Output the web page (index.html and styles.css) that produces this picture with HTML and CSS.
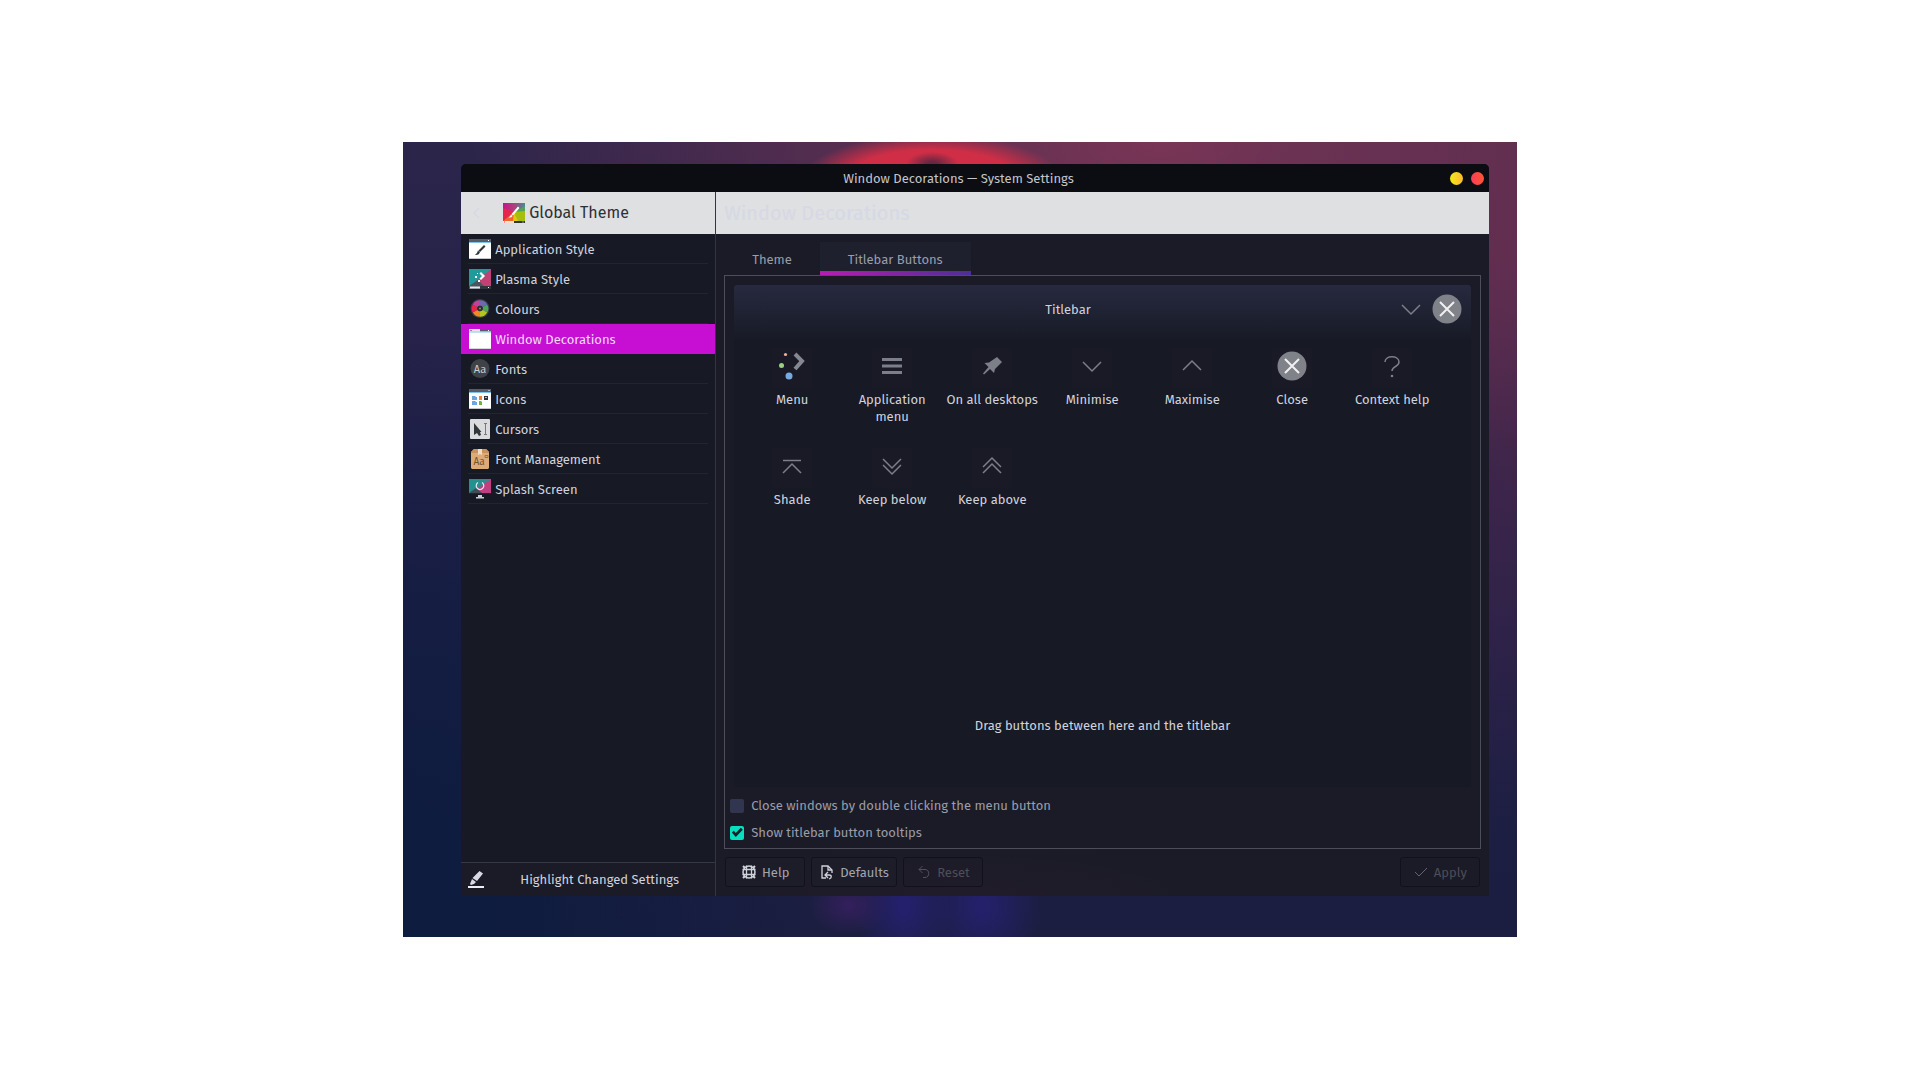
FILE: index.html
```html
<!DOCTYPE html>
<html lang="en-GB">
<head>
    <meta charset="UTF-8">
    <meta name="viewport" content="width=device-width, initial-scale=1.0">
    <title>Window Decorations — System Settings</title>
    <link rel="stylesheet" href="styles.css">
</head>
<body>
    <div class="desktop">
        <div class="window">
            <header class="titlebar">
                <h1>Window Decorations — System Settings</h1>
                <button class="dot yellow" aria-label="Minimise window"></button>
                <button class="dot red" aria-label="Close window"></button>
            </header>
            <div class="content">
                <aside class="sidebar">
                    <div class="side-header">
                        <button class="back" aria-label="Back">
                            <svg width="12" height="12" viewBox="0 0 12 12"><path d="M8 1 3 6l5 5" fill="none" stroke="#d7d9e5" stroke-width="1.500"/></svg>
                        </button>
                        <svg width="22" height="22" viewBox="0 0 22 22">
                            <defs>
                                <linearGradient id="rainbow" x1="0" y1="0" x2="1" y2="0"><stop offset="0" stop-color="#c3148e"/><stop offset=".5" stop-color="#b0407c"/><stop offset="1" stop-color="#3f8f9b"/></linearGradient>
                            </defs>
                            <rect y="1" width="22" height="18" fill="url(#rainbow)"/>
                            <path d="M0 6 11 10 0 19z" fill="#e8264c"/>
                            <path d="M22 4v8l-11-2z" fill="#55a05a"/>
                            <path d="m11 10 11-1v10h-8z" fill="#a8bd12"/>
                            <path d="M11 10 15 19H9z" fill="#e3c80d"/>
                            <path d="M11 10 10 19H0z" fill="#f2642c"/>
                            <path d="M15 4.500 16.500 6 10 13.500 8.500 12zM8 12.500l1.500 1.500q-1 2-4 1.500 2-1 2.500-3z" fill="#fff"/>
                            <path d="M0 19h11v2H0z" fill="#fbe3cf"/><path d="M11 19h11v2H11z" fill="#31363b"/>
                            <path d="M1 19.500h1v1H1z" fill="#da4453"/><path d="M19.500 19.500h1v1h-1z" fill="#fff"/>
                        </svg>
                        <h2>Global Theme</h2>
                    </div>
                    <nav class="side-list">
                        <a href="#" class="item">
                            <svg width="22" height="22" viewBox="0 0 22 22"><path fill="#fff" d="M0 1h22v19H0z"/><path fill="#565d66" d="M0 1h22v3H0z"/><path fill="#7cc3ea" d="M0 4h22v1H0z"/><path fill="#fff" d="M19 2h1v1h-1z"/><path fill="#c3c7ca" d="M0 20h22v1H0z"/><path d="M15 7 16.500 8.500 11 14 9.500 12.500zM9 12.500l2 2Q9.500 17.500 6 17 8.500 15 9 12.500z" fill="#31363b"/></svg>
                            <span>Application Style</span>
                        </a>
                        <a href="#" class="item">
                            <svg width="22" height="22" viewBox="0 0 22 22"><path fill="#1f9b9e" d="M0 1h22v20H0z"/><path fill="#c04274" d="M22 1v20H9L7 13z"/><path fill="#4a5560" d="m0 18 9-6 9 9H0z"/><path fill="#fff" d="m12 4 4 4-4 4-1.500-1.500L13 8l-2.500-2.500zM6 8h2v2H6zM8 5h1v1H8zM9 12h2v2H9z"/><path fill="#e3e6e8" d="M1 18.500h10v2H1z"/><path fill="#31363b" d="M11 18h11v3H11z"/><path fill="#fff" d="M19 19h1v1h-1z"/></svg>
                            <span>Plasma Style</span>
                        </a>
                        <a href="#" class="item">
                            <svg width="22" height="22" viewBox="0 0 22 22"><circle cx="11" cy="10.500" r="9.500" fill="#3b3f45"/><g fill="none" stroke-width="5.500"><path d="M11 5A5.500 5.500 0 0 1 15.800 7.800" stroke="#6f68b0"/><path d="M15.800 7.800A5.500 5.500 0 0 1 15.800 13.200" stroke="#4fa35a"/><path d="M15.800 13.200A5.500 5.500 0 0 1 11 16" stroke="#b5c520"/><path d="M11 16A5.500 5.500 0 0 1 6.200 13.200" stroke="#ef8a22"/><path d="M6.200 13.200A5.500 5.500 0 0 1 6.200 7.800" stroke="#e8244e"/><path d="M6.200 7.800A5.500 5.500 0 0 1 11 5" stroke="#c5409b"/></g><circle cx="11" cy="10.500" r="2.800" fill="#2c2c30"/><circle cx="11" cy="10.500" r="1" fill="#8a8a8a"/></svg>
                            <span>Colours</span>
                        </a>
                        <a href="#" class="item selected">
                            <svg width="22" height="22" viewBox="0 0 22 22"><path fill="#fff" d="M0 1h22v19H0z"/><path fill="#565d66" d="M11 1h11v2.500H11z"/><path fill="#e4e6e8" d="M0 1h11v2.500H0z"/><path fill="#7cc3ea" d="M0 3.500h22v1H0z"/><path fill="#31363b" d="M1.500 2h1v1h-1z"/><path fill="#fff" d="M19 2h1v1h-1z"/><path fill="#d5d7da" d="M0 20h22v1H0z"/></svg>
                            <span>Window Decorations</span>
                        </a>
                        <a href="#" class="item">
                            <svg width="22" height="22" viewBox="0 0 22 22"><circle cx="11" cy="10.500" r="9.500" fill="#3f4348"/><text x="11" y="15" text-anchor="middle" font-size="11" fill="#c9cccf">Aa</text></svg>
                            <span>Fonts</span>
                        </a>
                        <a href="#" class="item">
                            <svg width="22" height="22" viewBox="0 0 22 22"><path fill="#fff" d="M0 1h22v19H0z"/><path fill="#565d66" d="M0 1h22v3H0z"/><path fill="#7cc3ea" d="M0 4h22v1H0z"/><path fill="#fff" d="M19.500 2h1v1h-1z"/><path fill="#c3c7ca" d="M0 20h22v1H0z"/><path fill="#6ba6dc" d="M3 8h3l1 1h1v3H3zM3 13h3l1 1h1v3H3z"/><path fill="#f0803c" d="M10 8h3v4h-3z"/><path fill="#6cb33f" d="M10 13h2l1 1v3h-3z"/><path fill="#31363b" d="M15 8h4v4h-4z"/><path fill="#9cc5dc" d="M16 9h2v1h-2z"/></svg>
                            <span>Icons</span>
                        </a>
                        <a href="#" class="item">
                            <svg width="22" height="22" viewBox="0 0 22 22"><rect x="1" y="1" width="20" height="20" rx="1" fill="#d9dbdd"/><path d="M5 5v12l3-2 2 3 2-1-1-3h1.500z" fill="#31363b"/><path d="M15 5.500h3M16.500 5.500v11M15 16.500h3" fill="none" stroke="#777b80"/></svg>
                            <span>Cursors</span>
                        </a>
                        <a href="#" class="item">
                            <svg width="22" height="22" viewBox="0 0 22 22"><path d="M2 4l3-3h12l3 3v16l-1 1H3l-1-1z" fill="#dcab78"/><path d="M2 4l3-3h12l3 3v1H2z" fill="#c9935f"/><path d="M9 1h4v6l-2-1-2 1z" fill="#f2dcc6"/><text x="10" y="17" text-anchor="middle" font-size="10" fill="#6f5335">Aa</text><path d="M16 7.500h3v2h-3z" fill="none" stroke="#9a764f"/></svg>
                            <span>Font Management</span>
                        </a>
                        <a href="#" class="item">
                            <svg width="22" height="22" viewBox="0 0 22 22"><path fill="#26908f" d="M0 1h22v14H0z"/><path fill="#c03f80" d="M22 1v14H9l-1-4z"/><path fill="#414c57" d="m0 15 7-5 6 5z"/><path d="M9 4.500a3.800 3.800 0 1 0 4 0" fill="none" stroke="#e6e8ea" stroke-width="1.200"/><path d="M0 15h22v1H0z" fill="#23272b"/><path d="M9 17h4v2h2v1.500H7V19h2z" fill="#c9ced2"/></svg>
                            <span>Splash Screen</span>
                        </a>
                    </nav>
                    <button class="highlight">
                        <svg width="16" height="18" viewBox="0 0 16 18"><path d="M11.500 0 15 2.500 9 10 4.500 7zM4 8l4 3-2 2-3 1-1-1z" fill="#d8dae3"/><path d="M0 15h16v2H0z" fill="#eceef2"/></svg>
                        <span>Highlight Changed Settings</span>
                    </button>
                </aside>
                <main class="main">
                    <div class="page-header"><h2>Window Decorations</h2></div>
                    <div class="page">
                        <div class="tabs" role="tablist">
                            <button class="tab" role="tab">Theme</button>
                            <button class="tab active" role="tab" aria-selected="true">Titlebar Buttons</button>
                        </div>
                        <section class="panel">
                            <div class="drop-area">
                                <div class="preview">
                                    <span>Titlebar</span>
                                    <button aria-label="Minimise"><svg width="20" height="30" viewBox="0 0 20 30"><path d="m1 11 9 9 9-9" class="line"/></svg></button>
                                    <button aria-label="Close"><svg width="30" height="30" viewBox="0 0 30 30"><circle cx="15" cy="15" r="14.500" fill="#808289"/><path d="m8 8 14 14M22 8 8 22" class="cross"/></svg></button>
                                </div>
                                <div class="grid">
                                    <button class="deco">
                                        <svg width="40" height="40" viewBox="0 0 40 40"><circle cx="13.500" cy="6.500" r="1.600" fill="#e8b39f"/><circle cx="9.500" cy="17.500" r="2.500" fill="#9bd082"/><circle cx="17" cy="28" r="3.500" fill="#74abe2"/><path d="m23 6 7 7-7 8" fill="none" stroke="#858791" stroke-width="4"/></svg>
                                        <span>Menu</span>
                                    </button>
                                    <button class="deco">
                                        <svg width="40" height="40" viewBox="0 0 40 40"><path d="M10 10h20v3H10zM10 16.500h20v3H10zM10 23h20v3H10z" fill="#7c7e88"/></svg>
                                        <span>Application menu</span>
                                    </button>
                                    <button class="deco">
                                        <svg width="40" height="40" viewBox="0 0 40 40"><path d="m25 9 5 5-7 7-1 4-4-4-6 5.500-1-1L16.500 19l-4-4 4.500-.5z" fill="#7c7e88"/></svg>
                                        <span>On all desktops</span>
                                    </button>
                                    <button class="deco">
                                        <svg width="40" height="40" viewBox="0 0 40 40"><path d="m11 14 9 9 9-9" class="line"/></svg>
                                        <span>Minimise</span>
                                    </button>
                                    <button class="deco">
                                        <svg width="40" height="40" viewBox="0 0 40 40"><path d="m11 22 9-9 9 9" class="line"/></svg>
                                        <span>Maximise</span>
                                    </button>
                                    <button class="deco">
                                        <svg width="40" height="40" viewBox="0 0 40 40"><circle cx="20" cy="18" r="14.500" fill="#808289"/><path d="m13 11 14 14M27 11 13 25" class="cross"/></svg>
                                        <span>Close</span>
                                    </button>
                                    <button class="deco">
                                        <svg width="40" height="40" viewBox="0 0 40 40"><path d="M13 14c0-7 14-7 14 0 0 5-7 4-7 9" class="line"/><circle cx="20" cy="28" r="1.300" fill="#7c7e88"/></svg>
                                        <span>Context help</span>
                                    </button>
                                    <button class="deco">
                                        <svg width="40" height="40" viewBox="0 0 40 40"><path d="M11 12.500h18M11 25l9-9 9 9" class="line"/></svg>
                                        <span>Shade</span>
                                    </button>
                                    <button class="deco">
                                        <svg width="40" height="40" viewBox="0 0 40 40"><path d="m11 11 9 9 9-9M11 17l9 9 9-9" class="line"/></svg>
                                        <span>Keep below</span>
                                    </button>
                                    <button class="deco">
                                        <svg width="40" height="40" viewBox="0 0 40 40"><path d="m11 19 9-9 9 9M11 25l9-9 9 9" class="line"/></svg>
                                        <span>Keep above</span>
                                    </button>
                                </div>
                                <p class="hint">Drag buttons between here and the titlebar</p>
                            </div>
                            <label class="check"><input type="checkbox"> Close windows by double clicking the menu button</label>
                            <label class="check"><input type="checkbox" checked> Show titlebar button tooltips</label>
                        </section>
                        <footer class="actions">
                            <button class="btn">
                                <svg width="16" height="16" viewBox="0 0 16 16" fill="none" stroke="#d0d2da"><circle cx="8" cy="8" r="6" stroke-width="1.500"/><path d="M5.500 1.500v13M10.500 1.500v13M1.500 5.500h13M1.500 10.500h13" stroke-width="1.300"/><path d="M2 2l2 2M14 2l-2 2M2 14l2-2M14 14l-2-2" stroke-width="2"/></svg>
                                Help
                            </button>
                            <button class="btn">
                                <svg width="16" height="16" viewBox="0 0 16 16" fill="none" stroke="#d0d2da" stroke-width="1.300"><path d="M7 14H3V2h6l4 4v3"/><path d="M9 2v4h4" /><path d="M9 8l-3 3 3 3M6 11h4c3 0 3 3 0 4"/></svg>
                                Defaults
                            </button>
                            <button class="btn" disabled>
                                <svg width="16" height="16" viewBox="0 0 16 16" fill="none" stroke="#4f515b"><path d="M6.500 2 3 5.500 6.500 9M3 5.500h6c5 0 5 8 0 8H7"/></svg>
                                Reset
                            </button>
                            <button class="btn apply" disabled>
                                <svg width="16" height="16" viewBox="0 0 16 16" fill="none" stroke="#62646e"><path d="m2 8 4 4 8-8"/></svg>
                                Apply
                            </button>
                        </footer>
                    </div>
                </main>
            </div>
        </div>
    </div>
</body>
</html>
```
FILE: styles.css
```css
* {
    box-sizing: border-box;
}
body {
    margin: 0;
    min-height: 100vh;
    padding: 142px 21% 143px;
    display: flex;
    background: white;
    font-family: "Fira Sans", "Noto Sans", sans-serif;
    font-size: 13px;
    line-height: 17px;
    color: #d0d2de;
}
h1, h2, p {
    margin: 0;
    font-size: 13px;
    font-weight: 400;
}
button {
    font: inherit;
    color: inherit;
    background: none;
    border: none;
    padding: 0;
}
svg {
    display: block;
    flex-shrink: 0;
}
.line {
    fill: none;
    stroke: #7c7e88;
    stroke-width: 1.500;
}
.cross {
    fill: none;
    stroke: #f0f0f2;
    stroke-width: 2;
}
.desktop {
    flex: 1;
    display: flex;
    padding: 22px 28px 41px 58px;
    background:
        radial-gradient(ellipse 26px 12px at 47.500% 22px, #6a2640 20%, transparent 100%),
        radial-gradient(ellipse 130px 46px at 47.500% 38px, #cf2e46 66%, transparent 100%),
        radial-gradient(ellipse 40px 30px at 40% 96%, rgba(58, 32, 100, .8), transparent),
        radial-gradient(ellipse 50px 70px at 45% 96%, #24206c 10%, transparent),
        radial-gradient(ellipse 60px 70px at 52% 96%, #24206a 10%, transparent),
        radial-gradient(ellipse 700px 360px at 68% 0, rgba(126, 54, 86, .95), transparent),
        radial-gradient(ellipse 260px 560px at 100% 15%, rgba(84, 42, 76, .9), transparent),
        radial-gradient(ellipse 420px 600px at 0 100%, #0e1c3f 20%, transparent),
        linear-gradient(#2b254a, #201f48 50%, #1b1e40);
}
.window {
    flex: 1;
    display: flex;
    flex-direction: column;
    border-radius: 5px 5px 0 0;
    overflow: hidden;
    background: #1a1b27;
}
.titlebar {
    display: flex;
    align-items: center;
    gap: 8px;
    height: 28px;
    padding: 0 5px 0 14px;
    background: #0b0d13;
}
.titlebar h1 {
    flex: 1;
    text-align: center;
    color: #c4c5cb;
}
.dot {
    width: 13px;
    height: 13px;
    border-radius: 50%;
}
.yellow {
    background: linear-gradient(90deg, #f3e81c, #ffb92e);
}
.red {
    background: linear-gradient(90deg, #ff3d5c, #ff5530);
}
.content {
    flex: 1;
    display: flex;
}
.sidebar {
    width: 255px;
    flex-shrink: 0;
    display: flex;
    flex-direction: column;
    border-right: 1px solid #33353f;
    background: #171a25;
}
.side-header, .page-header {
    display: flex;
    align-items: center;
    height: 42px;
    background: #dee0e2;
}
.side-header {
    gap: 4px;
    padding-left: 10px;
}
.side-header h2 {
    font-size: 16px;
    line-height: 22px;
    color: #2d3035;
}
.back {
    width: 28px;
}
.side-list {
    flex: 1;
}
.item {
    display: flex;
    align-items: center;
    gap: 4px;
    height: 30px;
    padding-left: 8px;
    color: inherit;
    text-decoration: none;
    background: linear-gradient(#222530, #222530) 7px 100% / calc(100% - 14px) 1px no-repeat;
}
.selected {
    background: #c60fd3;
    color: #f0dcf5;
}
.highlight {
    display: flex;
    align-items: center;
    height: 34px;
    padding-left: 7px;
    border-top: 1px solid #363842;
    background: #1a1b27;
}
.highlight span {
    flex: 1;
}
.main {
    flex: 1;
    display: flex;
    flex-direction: column;
}
.page-header {
    padding-left: 8px;
}
.page-header h2 {
    font-size: 20px;
    line-height: 28px;
    color: #d6d8e5;
}
.page {
    flex: 1;
    display: flex;
    flex-direction: column;
    padding: 8px 8px 9px;
    background: radial-gradient(ellipse 260px 50px at 32% 100%, #211c29, transparent);
}
.tabs {
    display: flex;
}
.tab {
    height: 33px;
    padding: 2px 28px 0;
    color: #9b9da9;
}
.active {
    background: linear-gradient(90deg, #ba1bb2, #4c2f94) 0 100% / 100% 4px no-repeat, #1f202d;
}
.panel {
    flex: 1;
    display: flex;
    flex-direction: column;
    padding: 9px 9px 2px;
    border: 1px solid #4c4e58;
    background: #1a1b27;
}
.drop-area {
    flex: 1;
    display: flex;
    flex-direction: column;
    margin-bottom: 5px;
    background: #171a25;
}
.preview {
    display: flex;
    align-items: center;
    gap: 11px;
    height: 56px;
    padding: 0 9px 8px 12px;
    border-radius: 3px 3px 0 0;
    background: linear-gradient(#272a3f, #171a25);
}
.preview span {
    flex: 1;
    text-align: center;
}
.grid {
    flex: 1;
    display: grid;
    grid-template-columns: repeat(auto-fill, 100px);
    grid-auto-rows: 100px;
    padding: 7px 8px 0;
}
.deco {
    display: flex;
    flex-direction: column;
    align-items: center;
    gap: 3px;
}
.deco svg {
    background: #191a26;
}
.hint {
    padding-bottom: 53px;
    text-align: center;
}
.check {
    display: flex;
    align-items: center;
    gap: 7px;
    height: 27px;
    margin-left: -4px;
    color: #9b9da9;
}
.check input {
    appearance: none;
    width: 14px;
    height: 14px;
    margin: 0;
    border-radius: 2px;
    background: #31354f;
}
.check input:checked {
    background: #08dfc0;
}
.check input:checked::before {
    content: "";
    display: block;
    height: 14px;
    background: #10222b;
    clip-path: polygon(12% 50%, 26% 38%, 40% 54%, 76% 16%, 90% 30%, 40% 82%);
}
.actions {
    display: flex;
    gap: 6px;
    padding: 8px 1px 0;
}
.btn {
    display: flex;
    align-items: center;
    justify-content: center;
    gap: 5px;
    min-width: 80px;
    height: 30px;
    padding: 0 7px;
    border: 1px solid #10111c;
    border-radius: 3px;
    background: #1d1d2a;
    color: #a2a4b0;
}
.btn:disabled {
    background: none;
    color: #4c4e58;
}
.apply {
    margin-left: auto;
}
```
